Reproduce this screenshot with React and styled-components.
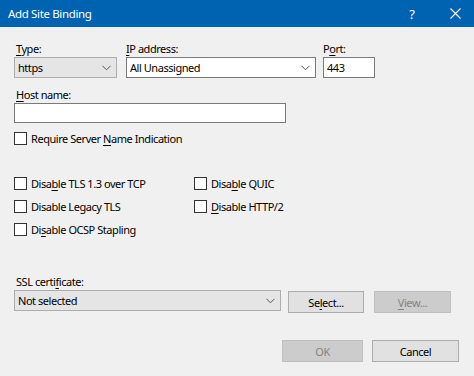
import React from 'react';
import styled, { createGlobalStyle } from 'styled-components';

const GlobalStyle = createGlobalStyle`
  html, body {
    margin: 0;
    padding: 0;
    background: #f0f0f0;
  }
  body {
    font-family: "Noto Sans", "Open Sans", sans-serif;
    font-size: 11px;
    letter-spacing: -0.45px;
    color: #000;
  }
`;

const Window = styled.div`
  width: 474px;
  height: 376px;
  display: flex;
  flex-direction: column;
  background: #f0f0f0;
  overflow: hidden;
`;

const TitleBar = styled.div`
  height: 27px;
  flex: none;
  background: #0063b1;
  color: #fff;
  display: flex;
  align-items: center;
  padding-left: 8px;
  font-size: 11.5px;
  letter-spacing: -0.35px;
`;

const Title = styled.div`
  flex: 1;
  margin-top: -1px;
`;

const TitleButton = styled.div`
  width: ${p => p.$w}px;
  display: flex;
  justify-content: center;
  align-items: center;
  font-size: 13px;
`;

const Body = styled.div`
  flex: 1;
  padding: 13px 0 0 14px;
  display: flex;
  flex-direction: column;
`;

const TopRow = styled.div`
  display: flex;
`;

const Field = styled.div`
  display: flex;
  flex-direction: column;
  width: ${p => p.$w}px;
  margin-left: ${p => p.$ml || 0}px;
`;

const Label = styled.div`
  height: 17px;
  line-height: 17px;
  padding-left: ${p => (p.$pl === undefined ? 2 : p.$pl)}px;
`;

const U = styled.span`
  text-decoration: underline;
  text-underline-offset: 2px;
`;

const Combo = styled.div`
  height: ${p => p.$h || 21}px;
  box-sizing: border-box;
  border: 1px solid ${p => (p.$gray ? '#adadad' : '#7a7a7a')};
  background: ${p => (p.$gray ? '#e5e5e5' : '#fff')};
  display: flex;
  align-items: center;
  padding-left: 3px;
`;

const ComboText = styled.div`
  flex: 1;
`;

const Arrow = styled.div`
  width: 20px;
  display: flex;
  justify-content: center;
`;

const TextBox = styled.div`
  height: ${p => p.$h || 21}px;
  width: ${p => p.$w}px;
  box-sizing: border-box;
  border: 1px solid #7a7a7a;
  background: #fff;
  display: flex;
  align-items: center;
  padding-left: 3px;
`;

const HostBlock = styled.div`
  margin-top: 8px;
  display: flex;
  flex-direction: column;
`;

const CheckRow = styled.label`
  display: flex;
  align-items: center;
  height: 16px;
  margin-top: ${p => p.$mt || 0}px;
`;

const Box = styled.span`
  width: 13px;
  height: 13px;
  box-sizing: border-box;
  border: 1px solid #333;
  background: #fff;
  margin-right: 4px;
  flex: none;
`;

const Options = styled.div`
  margin-top: 29px;
  display: grid;
  grid-template-columns: 180px 1fr;
  row-gap: 7px;
`;

const SslBlock = styled.div`
  margin-top: 36px;
  display: flex;
  flex-direction: column;
`;

const SslRow = styled.div`
  display: flex;
  align-items: flex-start;
`;

const Button = styled.div`
  width: ${p => p.$w}px;
  height: 22px;
  box-sizing: border-box;
  margin-left: ${p => p.$ml || 0}px;
  margin-top: ${p => p.$mt || 0}px;
  border: 1px solid ${p => (p.$disabled ? '#bfbfbf' : '#adadad')};
  background: ${p => (p.$disabled ? '#cccccc' : '#e1e1e1')};
  color: ${p => (p.$disabled ? '#838383' : '#000')};
  display: flex;
  justify-content: center;
  align-items: center;
`;

const Footer = styled.div`
  margin-top: 27px;
  display: flex;
  padding-left: 268px;
`;

const Chevron = () => (
  <svg width="9" height="6" viewBox="0 0 9 6">
    <path d="M0.5 0.8 L4.5 4.8 L8.5 0.8" fill="none" stroke="#555" strokeWidth="1" />
  </svg>
);

const CloseIcon = () => (
  <svg width="11" height="11" viewBox="0 0 11 11">
    <path d="M0.5 0.5 L10.5 10.5 M10.5 0.5 L0.5 10.5" stroke="#fff" strokeWidth="1.1" />
  </svg>
);

const Check = ({ children, mt }) => (
  <CheckRow $mt={mt}>
    <Box />
    <span>{children}</span>
  </CheckRow>
);

export default function App() {
  return (
    <Window>
      <GlobalStyle />
      <TitleBar>
        <Title>Add Site Binding</Title>
        <TitleButton $w={48}>?</TitleButton>
        <TitleButton $w={38}><CloseIcon /></TitleButton>
      </TitleBar>
      <Body>
        <TopRow>
          <Field $w={103}>
            <Label><U>T</U>ype:</Label>
            <Combo $gray>
              <ComboText>https</ComboText>
              <Arrow><Chevron /></Arrow>
            </Combo>
          </Field>
          <Field $w={190} $ml={9}>
            <Label $pl={-2}><U>I</U>P address:</Label>
            <Combo>
              <ComboText>All Unassigned</ComboText>
              <Arrow><Chevron /></Arrow>
            </Combo>
          </Field>
          <Field $w={52} $ml={7}>
            <Label $pl={0}>P<U>o</U>rt:</Label>
            <TextBox $w={52}>443</TextBox>
          </Field>
        </TopRow>

        <HostBlock>
          <Label><U>H</U>ost name:</Label>
          <TextBox $w={272} $h={20} />
          <Check mt={7}>Require Server <U>N</U>ame Indication</Check>
        </HostBlock>

        <Options>
          <Check>Disa<U>b</U>le TLS 1.3 over TCP</Check>
          <Check>Disa<U>b</U>le QUIC</Check>
          <Check>Disable Legacy TLS</Check>
          <Check><U>D</U>isable HTTP/2</Check>
          <Check>Di<U>s</U>able OCSP Stapling</Check>
        </Options>

        <SslBlock>
          <Label>SSL certi<U>f</U>icate:</Label>
          <SslRow>
            <Field $w={267}>
              <Combo $gray>
                <ComboText>Not selected</ComboText>
                <Arrow><Chevron /></Arrow>
              </Combo>
            </Field>
            <Button $w={76} $ml={7} $mt={1}>Se<U>l</U>ect...</Button>
            <Button $w={77} $ml={10} $mt={1} $disabled><U>V</U>iew...</Button>
          </SslRow>
        </SslBlock>

        <Footer>
          <Button $w={81} $disabled>OK</Button>
          <Button $w={87} $ml={9}>Cancel</Button>
        </Footer>
      </Body>
    </Window>
  );
}
